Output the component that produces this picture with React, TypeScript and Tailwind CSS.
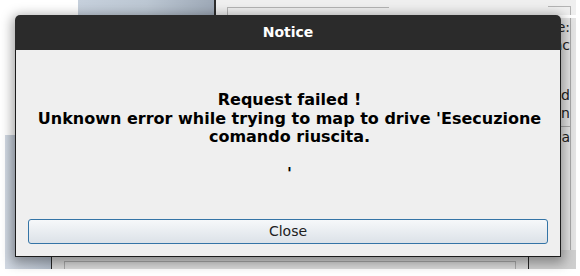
import React from 'react';

const font = "font-['DejaVu_Sans','Liberation_Sans',sans-serif]";

// Windows lying behind the dialog, seen only through its shadow margin
const Backdrop: React.FC = () => (
  <div className="absolute inset-0">
    {/* top edge of the window behind */}
    <div className="absolute left-0 top-0 w-[576px] h-[15px] flex">
      <div className="w-[78px] bg-white" />
      <div className="w-[136px] bg-gradient-to-r from-[#c6d0dc] via-[#bcc7d3] to-[#9ea9b7]" />
      <div className="w-[2px] bg-[#2e2e2e]" />
      <div className="flex-1 flex bg-[#efefef] pt-[6px] pl-[11px] pr-[5px] gap-[159px]">
        <div className="w-[162px] border-t border-l border-[#b4b4b4] mt-[1px]" />
        <div className="flex-1 border-t border-r border-[#b4b4b4]" />
      </div>
    </div>

    {/* right window, clipped by the dialog */}
    <div className={`absolute left-[540px] top-[18px] w-[36px] h-[238px] flex bg-[#e4e4e4] text-[14px] text-[#222] leading-[18px] ${font}`}>
      <div className="w-[30px] flex flex-col items-end">
        <span>de:</span>
        <span>inc</span>
        <span className="mt-[32px]">d</span>
        <span>en</span>
        <div className="self-stretch border-t border-[#a8a8a8] mt-[4px] pt-[1px] text-right">Ma</div>
      </div>
      <div className="w-[1px] bg-[#a8a8a8]" />
    </div>

    {/* bottom edge of the window behind */}
    <div className="absolute left-[5px] top-[250px] w-[571px] h-[19px] flex">
      <div className="w-[46px] bg-gradient-to-r from-[#d2d9e3] to-[#b6c0cd]" />
      <div className="w-[1px] bg-[#262626]" />
      <div className="w-[476px] bg-[#dadada] pt-[11px] pl-[12px] pr-[12px]">
        <div className="h-full border-t border-x border-[#a9a9a9]" />
      </div>
      <div className="w-[1px] bg-[#262626]" />
      <div className="flex-1 bg-[#cfcfcf]" />
    </div>

    {/* blue pane on the left */}
    <div className="absolute left-[5px] top-[135px] w-[10px] h-[115px] bg-gradient-to-r from-[#d2d9e3] to-[#c2cbd7]" />
  </div>
);

export default function App() {
  return (
    <div className={`relative w-[580px] h-[276px] bg-white overflow-hidden ${font}`}>
      <Backdrop />

      {/* Notice dialog */}
      <div className="absolute left-[15px] top-[15px] w-[546px] h-[242px] flex flex-col rounded-t-[5px] shadow-[0_3px_12px_3px_rgba(0,0,0,0.35)]">
        <div className="h-[35px] shrink-0 flex items-center justify-center bg-[#2b2b2b] rounded-t-[5px]">
          <span className="text-[14px] font-bold text-white">Notice</span>
        </div>

        <div className="flex-1 flex flex-col bg-[#efefef] border-x border-b border-[#1c1c1c]">
          <div className="pt-[41px] pl-[3px] text-center text-[16px] font-bold leading-[18.5px] text-black">
            <div>Request failed !</div>
            <div>Unknown error while trying to map to drive 'Esecuzione</div>
            <div>comando riuscita.</div>
            <div>&nbsp;</div>
            <div>'</div>
          </div>

          <button className="mt-auto mx-[12px] mb-[12px] h-[25px] rounded-[3px] border border-[#3474a6] bg-gradient-to-b from-[#f6f8fa] to-[#dce2e8] text-[14px] text-[#202020]">
            Close
          </button>
        </div>
      </div>
    </div>
  );
}
